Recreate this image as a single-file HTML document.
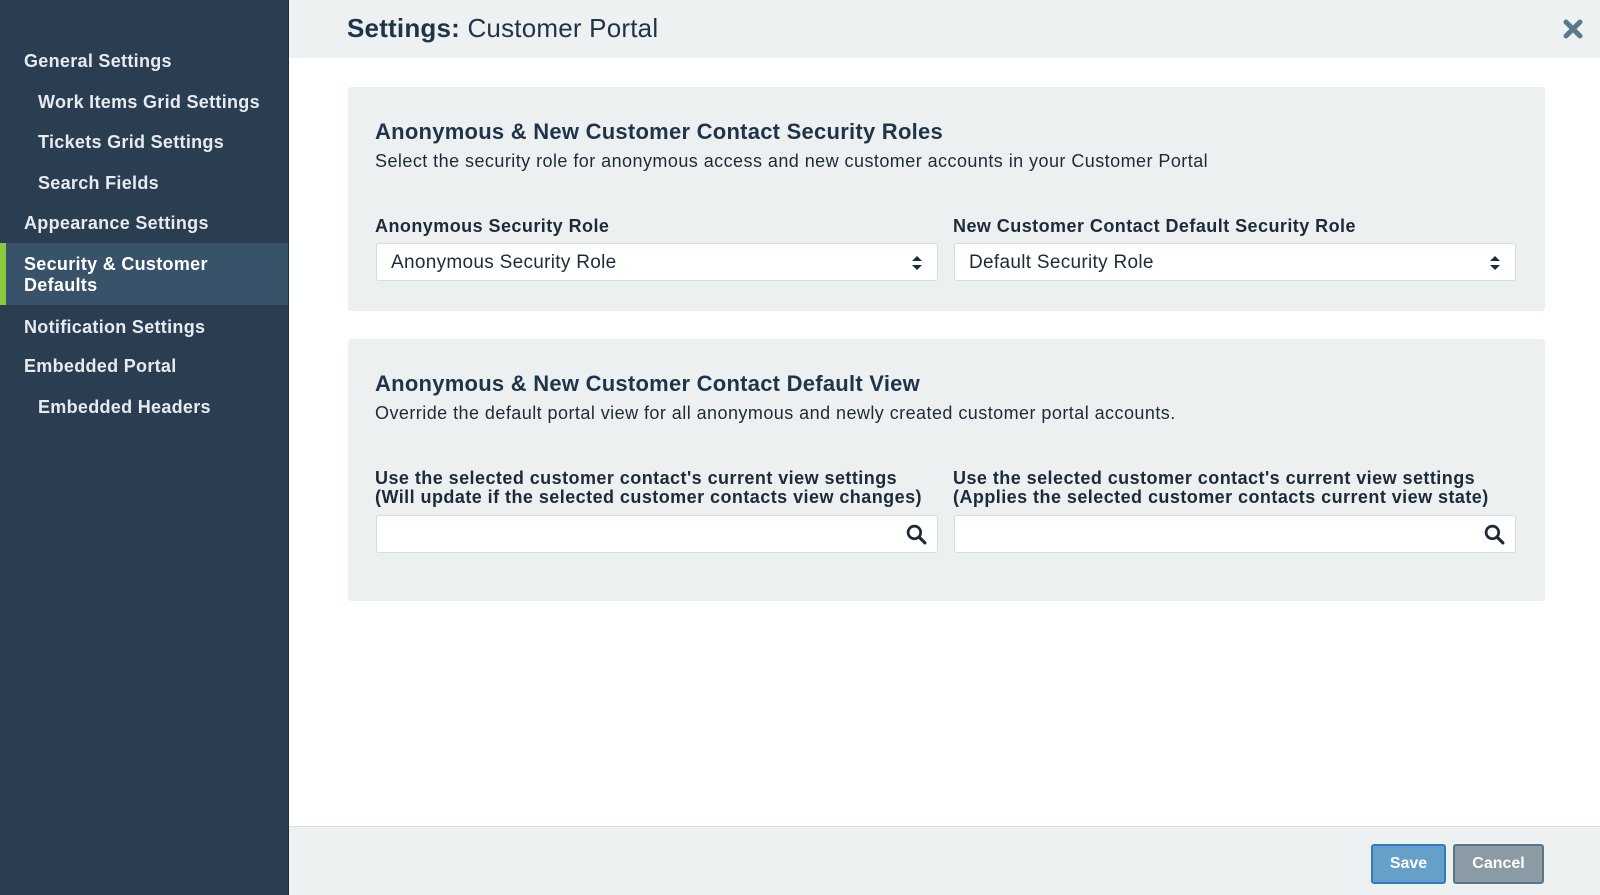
<!DOCTYPE html>
<html><head><style>
*{box-sizing:border-box;margin:0;padding:0}
body{width:1600px;height:895px;overflow:hidden;font-family:"Liberation Sans",Arial,sans-serif;background:#fff;position:relative}
.sb{position:absolute;left:0;top:0;width:289px;height:895px;background:#2b3e51;border-right:1px solid #1f2f3f}
.sb .t{position:absolute;color:#e6ebef;font-weight:bold;font-size:18px;line-height:21px;left:24px;letter-spacing:.3px}
.sb .s{left:38px}
.act{position:absolute;left:0;top:243px;width:288px;height:62px;background:#385269;border-left:6px solid #8dc63f}
.hdr{position:absolute;left:289px;top:0;width:1311px;height:58px;background:#edf1f2}
.hdr h1{position:absolute;left:58px;top:13px;font-size:26px;font-weight:normal;color:#1f3448;letter-spacing:.2px}
.panel{position:absolute;left:348px;width:1197px;background:#edf0f1;border-radius:3px}
.h2{position:absolute;left:27px;font-size:22px;font-weight:bold;color:#1f3448;letter-spacing:.25px}
.p{position:absolute;left:27px;font-size:18px;color:#1d2b38;letter-spacing:.45px}
.lb{position:absolute;font-size:18px;font-weight:bold;color:#1d2b38;line-height:19px;letter-spacing:.45px}
.in{position:absolute;height:38px;width:562px;background:#fff;border:1px solid #d6dde1;border-radius:3px;font-size:19px;color:#1d2b38;padding:8px 14px;letter-spacing:.3px}
.ft{position:absolute;left:289px;top:826px;width:1311px;height:69px;background:#edf1f2;border-top:1px solid #d8dfe3}
.btn{position:absolute;top:17px;height:40px;border-radius:3px;color:#fff;font-weight:bold;font-size:16px;text-align:center;line-height:36px}
</style></head><body>
<div class="sb">
<div class="act"></div>
<div class="t" style="top:51px">General Settings</div>
<div class="t s" style="top:92px">Work Items Grid Settings</div>
<div class="t s" style="top:132px">Tickets Grid Settings</div>
<div class="t s" style="top:173px">Search Fields</div>
<div class="t" style="top:213px">Appearance Settings</div>
<div class="t" style="top:254px;color:#fff">Security &amp; Customer<br>Defaults</div>
<div class="t" style="top:317px">Notification Settings</div>
<div class="t" style="top:356px">Embedded Portal</div>
<div class="t s" style="top:397px">Embedded Headers</div>
</div>
<div class="hdr"><h1><b>Settings:</b> Customer Portal</h1>
<svg style="position:absolute;left:1274px;top:19px" width="20" height="20" viewBox="0 0 20 20"><path d="M3 3L17 17M17 3L3 17" stroke="#5a7a8c" stroke-width="5" stroke-linecap="round"/></svg></div>

<div class="panel" style="top:87px;height:224px">
<div class="h2" style="top:32px">Anonymous &amp; New Customer Contact Security Roles</div>
<div class="p" style="top:64px">Select the security role for anonymous access and new customer accounts in your Customer Portal</div>
<div class="lb" style="left:27px;top:130px">Anonymous Security Role</div>
<div class="lb" style="left:605px;top:130px">New Customer Contact Default Security Role</div>
<div class="in" style="left:28px;top:156px">Anonymous Security Role<svg style="position:absolute;right:14px;top:11px" width="12" height="16" viewBox="0 0 12 16"><path d="M1 6L6 1L11 6ZM1 10L6 15L11 10Z" fill="#1d2b38"/></svg></div>
<div class="in" style="left:606px;top:156px">Default Security Role<svg style="position:absolute;right:14px;top:11px" width="12" height="16" viewBox="0 0 12 16"><path d="M1 6L6 1L11 6ZM1 10L6 15L11 10Z" fill="#1d2b38"/></svg></div>
</div>

<div class="panel" style="top:339px;height:262px">
<div class="h2" style="top:32px">Anonymous &amp; New Customer Contact Default View</div>
<div class="p" style="top:64px">Override the default portal view for all anonymous and newly created customer portal accounts.</div>
<div class="lb" style="left:27px;top:130px">Use the selected customer contact's current view settings<br>(Will update if the selected customer contacts view changes)</div>
<div class="lb" style="left:605px;top:130px">Use the selected customer contact's current view settings<br>(Applies the selected customer contacts current view state)</div>
<div class="in" style="left:28px;top:176px"><svg style="position:absolute;right:10px;top:8px" width="21" height="21" viewBox="0 0 20 20"><circle cx="8" cy="8" r="6" fill="none" stroke="#1d2b38" stroke-width="2.6"/><path d="M12.5 12.5L18 18" stroke="#1d2b38" stroke-width="3" stroke-linecap="round"/></svg></div>
<div class="in" style="left:606px;top:176px"><svg style="position:absolute;right:10px;top:8px" width="21" height="21" viewBox="0 0 20 20"><circle cx="8" cy="8" r="6" fill="none" stroke="#1d2b38" stroke-width="2.6"/><path d="M12.5 12.5L18 18" stroke="#1d2b38" stroke-width="3" stroke-linecap="round"/></svg></div>
</div>

<div class="ft">
<div class="btn" style="left:1082px;width:75px;background:#66a0c9;border:2px solid #2f7dbf">Save</div>
<div class="btn" style="left:1164px;width:91px;background:#8a9ba5;border:2px solid #5c7482">Cancel</div>
</div>
</body></html>
